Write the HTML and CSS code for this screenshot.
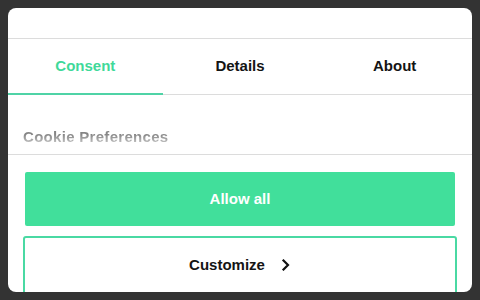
FILE: index.html
```html
<!DOCTYPE html>
<html>
<head>
<meta charset="utf-8">
<link rel="stylesheet" href="styles.css">
</head>
<body>
<div class="card">
  <div class="header"></div>
  <div class="tabs">
    <div class="tab active">Consent</div>
    <div class="tab">Details</div>
    <div class="tab">About</div>
  </div>
  <div class="body">
    <div class="pref-title">Cookie Preferences</div>
  </div>
  <div class="footer">
    <button class="btn btn-primary">Allow all</button>
    <button class="btn btn-outline">Customize
      <svg class="chev" width="10" height="12" viewBox="0 0 10 12"><polyline points="2.5,1.5 7,6 2.5,10.5" fill="none" stroke="#111" stroke-width="2.2" stroke-linecap="square"/></svg>
    </button>
  </div>
</div>
</body>
</html>
```
FILE: styles.css
```css
html, body {
  margin: 0;
  padding: 0;
}
body {
  background: #333333;
  padding: 8px;
  font-family: "Liberation Sans", Arial, sans-serif;
  height: 300px;
  box-sizing: border-box;
  overflow: hidden;
}
.card {
  width: 464px;
  height: 284px;
  background: #ffffff;
  border-radius: 8px;
  overflow: hidden;
  display: flex;
  flex-direction: column;
}
.header {
  height: 30px;
  flex: none;
  border-bottom: 1px solid #dcdcdc;
}
.tabs {
  display: flex;
  height: 55px;
  flex: none;
  border-bottom: 1px solid #dcdcdc;
}
.tab {
  flex: 1;
  display: flex;
  align-items: center;
  justify-content: center;
  font-size: 15px;
  font-weight: 700;
  color: #141414;
  box-sizing: border-box;
  padding-bottom: 1px;
  margin-bottom: -1px;
  border-bottom: 2px solid transparent;
}
.tab.active {
  color: #3fd99a;
  border-bottom-color: #4fd3a6;
}
.body {
  height: 60px;
  flex: none;
  box-sizing: border-box;
  padding: 33px 0 0 15px;
  border-bottom: 1px solid #dcdcdc;
  overflow: hidden;
}
.pref-title {
  display: inline-block;
  font-size: 15px;
  font-weight: 700;
  line-height: 18px;
  letter-spacing: 0.3px;
  background: linear-gradient(180deg, #858585 35%, #d6d6d6 100%);
  -webkit-background-clip: text;
  background-clip: text;
  color: transparent;
}
.footer {
  padding: 17px 15px 0 15px;
  display: flex;
  flex-direction: column;
  gap: 10px;
}
.btn {
  font-family: "Liberation Sans", Arial, sans-serif;
  font-size: 15px;
  font-weight: 700;
  display: flex;
  align-items: center;
  justify-content: center;
  box-sizing: border-box;
  cursor: pointer;
}
.btn-primary {
  margin: 0 2px;
  height: 54px;
  background: #41df9b;
  color: #ffffff;
  border: none;
  border-radius: 2px;
  padding-bottom: 2px;
}
.btn-outline {
  height: 60px;
  background: #ffffff;
  color: #141414;
  border: 2px solid #4ad9a3;
  border-radius: 3px;
  padding-bottom: 4px;
  gap: 0;
}
.chev {
  margin-left: 16px;
  margin-top: 1px;
}
```
